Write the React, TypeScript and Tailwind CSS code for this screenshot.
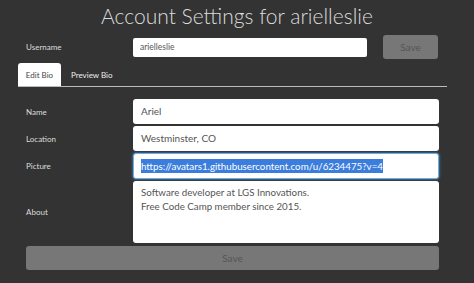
import React from "react";

const rows = [
  { label: "Name", value: "Ariel" },
  { label: "Location", value: "Westminster, CO" },
];

export default function App() {
  return (
    <div className="w-[474px] h-[283px] overflow-hidden bg-[#333333] font-['Lato',sans-serif] text-[#dddddd]">
      <h1 className="pt-[1px] text-center text-[21px] font-light leading-[30px] text-[#dcdcdc]">
        Account Settings for arielleslie
      </h1>

      <div className="mt-[4px] flex items-center pl-[26px]">
        <span className="w-[107px] text-[8px]">Username</span>
        <input
          readOnly
          value="arielleslie"
          className="h-[19px] w-[234px] rounded-[2px] bg-white px-[7px] text-[8.5px] text-[#555] outline-none"
        />
        <button className="ml-[16px] h-[24px] w-[55px] rounded-[3px] bg-[#777777] text-[10px] text-[#555555]">
          Save
        </button>
      </div>

      <div className="ml-[18px] mt-[4px] flex w-[429px] items-end border-b border-[#bbbbbb]">
        <div className="flex h-[23px] w-[43px] items-center justify-center rounded-t-[3px] bg-white text-[8px] text-[#444]">
          Edit Bio
        </div>
        <div className="flex h-[23px] items-center px-[10px] text-[8px] text-[#eee]">Preview Bio</div>
      </div>

      <div className="mt-[12px] flex flex-col gap-[2px] pl-[26px]">
        {rows.map((r) => (
          <div key={r.label} className="flex items-center">
            <span className="w-[107px] text-[8px]">{r.label}</span>
            <div className="flex h-[25px] w-[306px] items-center rounded-[3px] bg-white px-[8px] text-[10px] text-[#555]">
              {r.value}
            </div>
          </div>
        ))}
        <div className="flex items-center">
          <span className="w-[107px] text-[8px]">Picture</span>
          <div className="flex h-[26px] w-[306px] items-center whitespace-nowrap rounded-[3px] border border-[#66afe9] bg-white px-[7px] text-[9.75px] shadow-[0_0_3px_rgba(102,175,233,0.8)]">
            <span className="bg-[#3b7ddd] text-white">https://avatars1.githubusercontent.com/u/6234475?v=4</span>
          </div>
        </div>
        <div className="flex items-center">
          <span className="w-[107px] text-[8px]">About</span>
          <div className="h-[62px] w-[306px] rounded-[3px] bg-white px-[8px] py-[4px] text-[9.75px] leading-[14px] text-[#555]">
            Software developer at LGS Innovations.
            <br />
            Free Code Camp member since 2015.
          </div>
        </div>
        <button className="mt-[1px] h-[24px] w-[413px] rounded-[3px] bg-[#777777] text-[10px] text-[#555555]">
          Save
        </button>
      </div>
    </div>
  );
}
